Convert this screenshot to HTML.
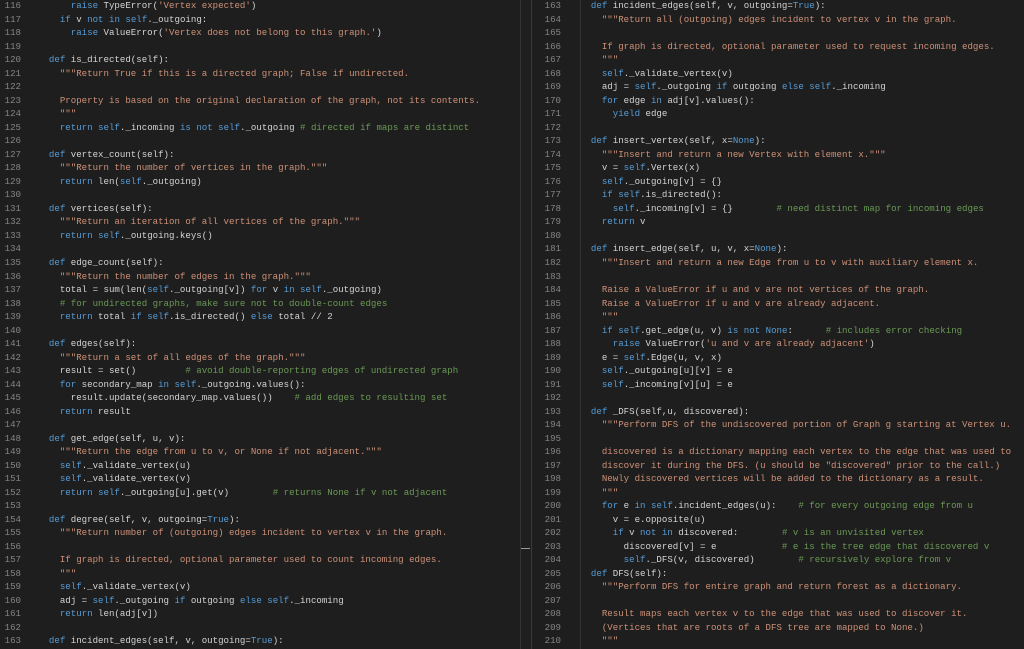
<!DOCTYPE html>
<html><head><meta charset="utf-8"><style>
html,body{margin:0;padding:0;width:1024px;height:649px;overflow:hidden;background:#1e1e1e;}
.pane{position:absolute;top:0;height:649px;overflow:hidden;font-family:"Liberation Mono",monospace;font-size:9.1px;color:#d4d4d4;}
.ln{position:absolute;top:-0.8px;text-align:right;color:#858585;}
.code{position:absolute;top:-0.8px;white-space:normal;}
.ln div,.code div{height:13.53px;line-height:13.53px;white-space:pre;}
.k{color:#569cd6}.s{color:#ce9178}.c{color:#6a9955}
</style></head><body>
<div class="pane" style="left:0;width:520px;">
<div class="ln" style="left:0;width:21px;">
<div>116</div><div>117</div><div>118</div><div>119</div><div>120</div><div>121</div><div>122</div><div>123</div><div>124</div><div>125</div><div>126</div><div>127</div><div>128</div><div>129</div><div>130</div><div>131</div><div>132</div><div>133</div><div>134</div><div>135</div><div>136</div><div>137</div><div>138</div><div>139</div><div>140</div><div>141</div><div>142</div><div>143</div><div>144</div><div>145</div><div>146</div><div>147</div><div>148</div><div>149</div><div>150</div><div>151</div><div>152</div><div>153</div><div>154</div><div>155</div><div>156</div><div>157</div><div>158</div><div>159</div><div>160</div><div>161</div><div>162</div><div>163</div>
</div>
<div class="code" style="left:38px;">
<div>      <span class="k">raise</span> TypeError(<span class="s">'Vertex expected'</span>)</div>
<div>    <span class="k">if</span> v <span class="k">not</span> <span class="k">in</span> <span class="k">self</span>._outgoing:</div>
<div>      <span class="k">raise</span> ValueError(<span class="s">'Vertex does not belong to this graph.'</span>)</div>
<div> </div>
<div>  <span class="k">def</span> is_directed(self):</div>
<div>    <span class="s">"""Return True if this is a directed graph; False if undirected.</span></div>
<div> </div>
<div><span class="s">    Property is based on the original declaration of the graph, not its contents.</span></div>
<div><span class="s">    """</span></div>
<div>    <span class="k">return</span> <span class="k">self</span>._incoming <span class="k">is</span> <span class="k">not</span> <span class="k">self</span>._outgoing <span class="c"># directed if maps are distinct</span></div>
<div> </div>
<div>  <span class="k">def</span> vertex_count(self):</div>
<div>    <span class="s">"""Return the number of vertices in the graph."""</span></div>
<div>    <span class="k">return</span> len(<span class="k">self</span>._outgoing)</div>
<div> </div>
<div>  <span class="k">def</span> vertices(self):</div>
<div>    <span class="s">"""Return an iteration of all vertices of the graph."""</span></div>
<div>    <span class="k">return</span> <span class="k">self</span>._outgoing.keys()</div>
<div> </div>
<div>  <span class="k">def</span> edge_count(self):</div>
<div>    <span class="s">"""Return the number of edges in the graph."""</span></div>
<div>    total = sum(len(<span class="k">self</span>._outgoing[v]) <span class="k">for</span> v <span class="k">in</span> <span class="k">self</span>._outgoing)</div>
<div>    <span class="c"># for undirected graphs, make sure not to double-count edges</span></div>
<div>    <span class="k">return</span> total <span class="k">if</span> <span class="k">self</span>.is_directed() <span class="k">else</span> total // 2</div>
<div> </div>
<div>  <span class="k">def</span> edges(self):</div>
<div>    <span class="s">"""Return a set of all edges of the graph."""</span></div>
<div>    result = set()         <span class="c"># avoid double-reporting edges of undirected graph</span></div>
<div>    <span class="k">for</span> secondary_map <span class="k">in</span> <span class="k">self</span>._outgoing.values():</div>
<div>      result.update(secondary_map.values())    <span class="c"># add edges to resulting set</span></div>
<div>    <span class="k">return</span> result</div>
<div> </div>
<div>  <span class="k">def</span> get_edge(self, u, v):</div>
<div>    <span class="s">"""Return the edge from u to v, or None if not adjacent."""</span></div>
<div>    <span class="k">self</span>._validate_vertex(u)</div>
<div>    <span class="k">self</span>._validate_vertex(v)</div>
<div>    <span class="k">return</span> <span class="k">self</span>._outgoing[u].get(v)        <span class="c"># returns None if v not adjacent</span></div>
<div> </div>
<div>  <span class="k">def</span> degree(self, v, outgoing=<span class="k">True</span>):</div>
<div>    <span class="s">"""Return number of (outgoing) edges incident to vertex v in the graph.</span></div>
<div> </div>
<div><span class="s">    If graph is directed, optional parameter used to count incoming edges.</span></div>
<div><span class="s">    """</span></div>
<div>    <span class="k">self</span>._validate_vertex(v)</div>
<div>    adj = <span class="k">self</span>._outgoing <span class="k">if</span> outgoing <span class="k">else</span> <span class="k">self</span>._incoming</div>
<div>    <span class="k">return</span> len(adj[v])</div>
<div> </div>
<div>  <span class="k">def</span> incident_edges(self, v, outgoing=<span class="k">True</span>):</div>
</div>
</div>
<div style="position:absolute;left:520px;top:0;width:10px;height:649px;background:#1f1f1f;border-left:1px solid #333;border-right:1px solid #3a3a3a;"></div>
<div style="position:absolute;left:521px;top:548px;width:9px;height:1px;background:#999;"></div>
<div class="pane" style="left:531px;width:493px;">
<div class="ln" style="left:0;width:30px;">
<div>163</div><div>164</div><div>165</div><div>166</div><div>167</div><div>168</div><div>169</div><div>170</div><div>171</div><div>172</div><div>173</div><div>174</div><div>175</div><div>176</div><div>177</div><div>178</div><div>179</div><div>180</div><div>181</div><div>182</div><div>183</div><div>184</div><div>185</div><div>186</div><div>187</div><div>188</div><div>189</div><div>190</div><div>191</div><div>192</div><div>193</div><div>194</div><div>195</div><div>196</div><div>197</div><div>198</div><div>199</div><div>200</div><div>201</div><div>202</div><div>203</div><div>204</div><div>205</div><div>206</div><div>207</div><div>208</div><div>209</div><div>210</div>
</div>
<div style="position:absolute;left:49px;top:0;width:1px;height:649px;background:#333;"></div>
<div class="code" style="left:49px;">
<div>  <span class="k">def</span> incident_edges(self, v, outgoing=<span class="k">True</span>):</div>
<div>    <span class="s">"""Return all (outgoing) edges incident to vertex v in the graph.</span></div>
<div> </div>
<div><span class="s">    If graph is directed, optional parameter used to request incoming edges.</span></div>
<div><span class="s">    """</span></div>
<div>    <span class="k">self</span>._validate_vertex(v)</div>
<div>    adj = <span class="k">self</span>._outgoing <span class="k">if</span> outgoing <span class="k">else</span> <span class="k">self</span>._incoming</div>
<div>    <span class="k">for</span> edge <span class="k">in</span> adj[v].values():</div>
<div>      <span class="k">yield</span> edge</div>
<div> </div>
<div>  <span class="k">def</span> insert_vertex(self, x=<span class="k">None</span>):</div>
<div>    <span class="s">"""Insert and return a new Vertex with element x."""</span></div>
<div>    v = <span class="k">self</span>.Vertex(x)</div>
<div>    <span class="k">self</span>._outgoing[v] = {}</div>
<div>    <span class="k">if</span> <span class="k">self</span>.is_directed():</div>
<div>      <span class="k">self</span>._incoming[v] = {}        <span class="c"># need distinct map for incoming edges</span></div>
<div>    <span class="k">return</span> v</div>
<div> </div>
<div>  <span class="k">def</span> insert_edge(self, u, v, x=<span class="k">None</span>):</div>
<div>    <span class="s">"""Insert and return a new Edge from u to v with auxiliary element x.</span></div>
<div> </div>
<div><span class="s">    Raise a ValueError if u and v are not vertices of the graph.</span></div>
<div><span class="s">    Raise a ValueError if u and v are already adjacent.</span></div>
<div><span class="s">    """</span></div>
<div>    <span class="k">if</span> <span class="k">self</span>.get_edge(u, v) <span class="k">is</span> <span class="k">not</span> <span class="k">None</span>:      <span class="c"># includes error checking</span></div>
<div>      <span class="k">raise</span> ValueError(<span class="s">'u and v are already adjacent'</span>)</div>
<div>    e = <span class="k">self</span>.Edge(u, v, x)</div>
<div>    <span class="k">self</span>._outgoing[u][v] = e</div>
<div>    <span class="k">self</span>._incoming[v][u] = e</div>
<div> </div>
<div>  <span class="k">def</span> _DFS(self,u, discovered):</div>
<div>    <span class="s">"""Perform DFS of the undiscovered portion of Graph g starting at Vertex u.</span></div>
<div> </div>
<div><span class="s">    discovered is a dictionary mapping each vertex to the edge that was used to</span></div>
<div><span class="s">    discover it during the DFS. (u should be "discovered" prior to the call.)</span></div>
<div><span class="s">    Newly discovered vertices will be added to the dictionary as a result.</span></div>
<div><span class="s">    """</span></div>
<div>    <span class="k">for</span> e <span class="k">in</span> <span class="k">self</span>.incident_edges(u):    <span class="c"># for every outgoing edge from u</span></div>
<div>      v = e.opposite(u)</div>
<div>      <span class="k">if</span> v <span class="k">not</span> <span class="k">in</span> discovered:        <span class="c"># v is an unvisited vertex</span></div>
<div>        discovered[v] = e            <span class="c"># e is the tree edge that discovered v</span></div>
<div>        <span class="k">self</span>._DFS(v, discovered)        <span class="c"># recursively explore from v</span></div>
<div>  <span class="k">def</span> DFS(self):</div>
<div>    <span class="s">"""Perform DFS for entire graph and return forest as a dictionary.</span></div>
<div> </div>
<div><span class="s">    Result maps each vertex v to the edge that was used to discover it.</span></div>
<div><span class="s">    (Vertices that are roots of a DFS tree are mapped to None.)</span></div>
<div><span class="s">    """</span></div>
</div>
</div>
</body></html>
